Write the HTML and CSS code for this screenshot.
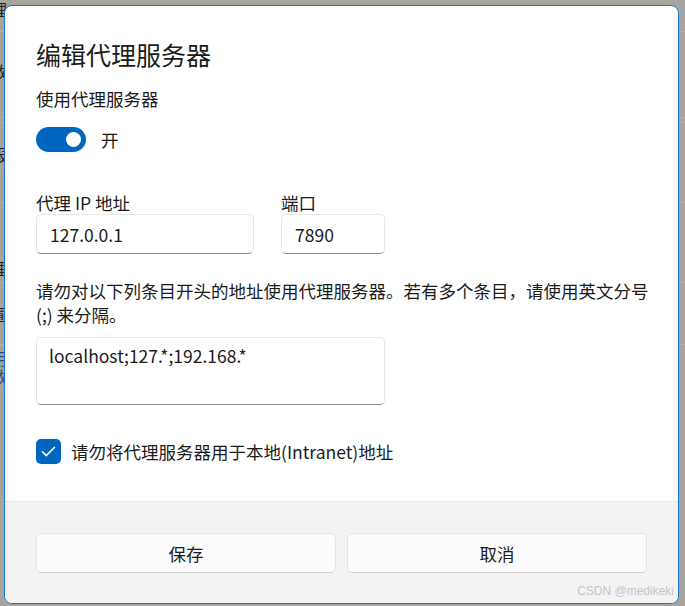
FILE: index.html
```html
<!DOCTYPE html>
<html lang="zh-CN">
<head>
    <meta charset="UTF-8">
    <title>编辑代理服务器</title>
    <link rel="stylesheet" href="styles.css">
</head>
<body>
<!-- settings page behind the dialog -->
<div class="page">
    <div class="row row1"><span>理</span></div>
    <div class="row row2"><span>数</span></div>
    <div class="row row3"></div>
    <div class="row row4"><span>服</span></div>
    <div class="row row5"><span>理</span></div>
    <div class="row row6"><span>圃</span></div>
    <div class="row row7"><span class="blue">用</span><span class="blue">数</span></div>
</div>

<div class="dialog">
    <div class="content">
        <h1 class="title">编辑代理服务器</h1>
        <p class="text">使用代理服务器</p>
        <div class="toggle-row">
            <div class="toggle"><div class="knob"></div></div>
            <span class="text">开</span>
        </div>

        <div class="fields">
            <div class="field">
                <label class="label">代理 IP 地址</label>
                <input class="input ip" type="text" value="127.0.0.1">
            </div>
            <div class="field">
                <label class="label">端口</label>
                <input class="input port" type="text" value="7890">
            </div>
        </div>

        <p class="desc">请勿对以下列条目开头的地址使用代理服务器。若有多个条目，请使用英文分号 (;) 来分隔。</p>
        <textarea class="input area">localhost;127.*;192.168.*</textarea>

        <div class="check-row">
            <div class="check">
                <svg width="25" height="25" viewBox="0 0 25 25">
                    <path d="M6.5 12.8 L10.3 16.6 L18.6 8.3" fill="none" stroke="#fff" stroke-width="1.6" stroke-linecap="round" stroke-linejoin="round"/>
                </svg>
            </div>
            <span class="text">请勿将代理服务器用于本地(Intranet)地址</span>
        </div>
    </div>
    <div class="footer">
        <button class="btn">保存</button>
        <button class="btn">取消</button>
    </div>
    <div class="mark">CSDN @medikeki</div>
</div>
</body>
</html>
```

FILE: styles.css
```css
*{
    margin: 0;
    padding: 0;
    box-sizing: border-box;
}
body{
    width: 685px;
    height: 606px;
    overflow: hidden;
    background: #a7a39f;
    font-family: "Noto Sans CJK SC", "Liberation Sans", sans-serif;
    color: #1b1b1b;
}

/* page behind */
.row{
    border-bottom: 1px solid #b3b0ac;
    font-size: 16px;
    line-height: 18px;
    color: #222;
    display: flex;
    flex-direction: column;
}
.row span{
    margin-left: -9px;
}
.row .blue{
    color: #1d4f8f;
}
.row1{ height: 32px; }
.row2{ height: 86px; padding-top: 30px; }
.row3{ height: 5px; }
.row4{ height: 80px; padding-top: 22px; }
.row5{ height: 80px; padding-top: 56px; }
.row6{ height: 62px; padding-top: 22px; }
.row7{ height: 120px; padding-top: 4px; border-bottom: none; }

/* dialog */
.dialog{
    position: absolute;
    left: 4px;
    top: 5px;
    width: 675px;
    height: 599px;
    border: 1px solid #1b74d3;
    border-radius: 8px;
    background: #fff;
    overflow: hidden;
    display: flex;
    flex-direction: column;
}
.content{
    flex: 1;
    padding: 30px 31px 0;
}
.title{
    font-size: 25px;
    font-weight: normal;
    line-height: 36px;
    margin-bottom: 14px;
}
.text{
    font-size: 17.5px;
    line-height: 25px;
}
.toggle-row{
    display: flex;
    align-items: center;
    gap: 15px;
    margin-top: 16px;
}
.toggle{
    width: 50px;
    height: 25px;
    border-radius: 13px;
    background: #0067c0;
    display: flex;
    align-items: center;
    justify-content: flex-end;
    padding-right: 5px;
}
.knob{
    width: 15px;
    height: 15px;
    border-radius: 50%;
    background: #fff;
}

.fields{
    display: flex;
    gap: 27px;
    margin-top: 41px;
}
.field{
    display: flex;
    flex-direction: column;
}
.label{
    font-size: 17.5px;
    line-height: 20px;
    margin-bottom: 1px;
}
.input{
    height: 40px;
    border: 1px solid #e6e6e6;
    border-bottom-color: #8b8b8b;
    border-radius: 5px;
    background: #fff;
    font-family: "Noto Sans CJK SC", "Liberation Sans", sans-serif;
    font-size: 17.5px;
    color: #1b1b1b;
    padding: 0 13px;
    outline: none;
}
.ip{
    width: 218px;
}
.port{
    width: 104px;
}
.desc{
    font-size: 17.5px;
    line-height: 24px;
    margin-top: 25px;
    margin-right: -6px;
}
.area{
    display: block;
    width: 349px;
    height: 68px;
    margin-top: 10px;
    resize: none;
    line-height: 25px;
    padding: 5px 12px;
    overflow: hidden;
}
.check-row{
    display: flex;
    align-items: center;
    gap: 10px;
    margin-top: 34px;
}
.check{
    width: 25px;
    height: 25px;
    border-radius: 5px;
    background: #0067c0;
}
.check svg{
    display: block;
}

/* footer */
.footer{
    background: #f3f3f3;
    border-top: 1px solid #e5e5e5;
    padding: 31px 31px 30px;
    display: flex;
    gap: 11px;
}
.btn{
    flex: 1;
    height: 40px;
    border: 1px solid #e5e5e5;
    border-bottom-color: #cfcfcf;
    border-radius: 5px;
    background: #fbfbfb;
    font-family: "Noto Sans CJK SC", "Liberation Sans", sans-serif;
    font-size: 17.5px;
    color: #1b1b1b;
}
.mark{
    position: absolute;
    right: 4px;
    bottom: 5px;
    font-family: "Liberation Sans", sans-serif;
    font-size: 12px;
    color: #c7c7c7;
}
```
